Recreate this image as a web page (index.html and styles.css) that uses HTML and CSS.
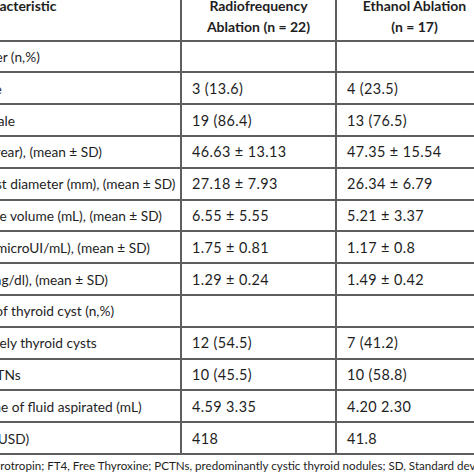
FILE: index.html
```html
<!DOCTYPE html>
<html>
<head>
<meta charset="utf-8">
<link rel="stylesheet" href="styles.css">
</head>
<body>
<div class="page">
  <div class="table">
    <div class="row head">
      <div class="cell c1">Characteristic</div>
      <div class="cell c2">Radiofrequency<br>Ablation (n = 22)</div>
      <div class="cell c3">Ethanol Ablation<br>(n = 17)</div>
    </div>
    <div class="row"><div class="cell c1">Gender (n,%)</div><div class="cell c2"></div><div class="cell c3"></div></div>
    <div class="row"><div class="cell c1 sub">Male</div><div class="cell c2">3 (13.6)</div><div class="cell c3">4 (23.5)</div></div>
    <div class="row"><div class="cell c1 sub">Female</div><div class="cell c2">19 (86.4)</div><div class="cell c3">13 (76.5)</div></div>
    <div class="row"><div class="cell c1">Age (year), (mean ± SD)</div><div class="cell c2">46.63 ± 13.13</div><div class="cell c3">47.35 ± 15.54</div></div>
    <div class="row"><div class="cell c1">Largest diameter (mm), (mean ± SD)</div><div class="cell c2">27.18 ± 7.93</div><div class="cell c3">26.34 ± 6.79</div></div>
    <div class="row"><div class="cell c1">Nodule volume (mL), (mean ± SD)</div><div class="cell c2">6.55 ± 5.55</div><div class="cell c3">5.21 ± 3.37</div></div>
    <div class="row"><div class="cell c1">TSH (microUI/mL), (mean ± SD)</div><div class="cell c2">1.75 ± 0.81</div><div class="cell c3">1.17 ± 0.8</div></div>
    <div class="row"><div class="cell c1">FT4 (ng/dl), (mean ± SD)</div><div class="cell c2">1.29 ± 0.24</div><div class="cell c3">1.49 ± 0.42</div></div>
    <div class="row"><div class="cell c1">Type of thyroid cyst (n,%)</div><div class="cell c2"></div><div class="cell c3"></div></div>
    <div class="row"><div class="cell c1 sub2">Purely thyroid cysts</div><div class="cell c2">12 (54.5)</div><div class="cell c3">7 (41.2)</div></div>
    <div class="row"><div class="cell c1 sub2">PCTNs</div><div class="cell c2">10 (45.5)</div><div class="cell c3">10 (58.8)</div></div>
    <div class="row"><div class="cell c1">Volume of fluid aspirated (mL)</div><div class="cell c2">4.59 3.35</div><div class="cell c3">4.20 2.30</div></div>
    <div class="row"><div class="cell c1">Cost (USD)</div><div class="cell c2">418</div><div class="cell c3">41.8</div></div>
  </div>
  <p class="note">Abbreviations: TSH, Thyrotropin; FT4, Free Thyroxine; PCTNs, predominantly cystic thyroid nodules; SD, Standard deviation.</p>
</div>
</body>
</html>
```
FILE: styles.css
```css
html, body {
  margin: 0;
  padding: 0;
  background: #fff;
  overflow: hidden;
}
body {
  width: 474px;
  height: 474px;
  font-family: "Lato", "Open Sans", sans-serif;
  color: #1e1e1e;
}
.page {
  margin: -13px 0 0 -47px;
  width: 700px;
}
.table {
  display: flex;
  flex-direction: column;
  width: 539px;
}
.row {
  display: grid;
  grid-template-columns: 229px 155px 155px;
  height: 31.8px;
  box-sizing: border-box;
  border-bottom: 2px solid #5e5e5e;
  font-size: 14.4px;
}
.row.head {
  height: 54.7px;
  font-size: 14px;
  font-weight: 700;
  line-height: 21px;
}
.cell {
  display: flex;
  align-items: center;
  padding: 0 10px;
  white-space: nowrap;
}
.c1 {
  font-size: 13.7px;
}
.c2, .c3 {
  letter-spacing: 0.4px;
}
.c1.sub {
  padding-left: 19px;
}
.c1.sub2 {
  padding-left: 26px;
}
.c1, .c2 {
  border-right: 2px solid #5e5e5e;
}
.head .cell {
  align-items: flex-start;
  padding-top: 8px;
  letter-spacing: 0;
  font-size: 14px;
}
.head .c1 {
  padding-left: 17px;
}
.head .c2, .head .c3 {
  justify-content: center;
  text-align: center;
}
.note {
  margin: 4px 0 0 -75px;
  font-size: 11.6px;
  white-space: nowrap;
}
```
